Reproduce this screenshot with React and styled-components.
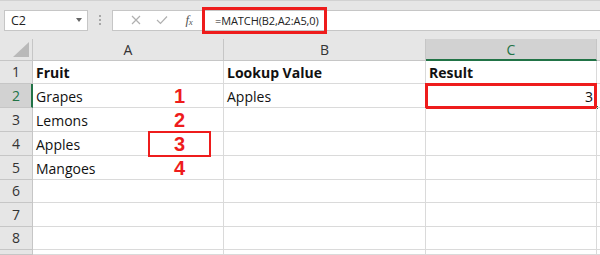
import React from "react";
import styled, { createGlobalStyle, css } from "styled-components";

const Global = createGlobalStyle`
  html, body { margin: 0; padding: 0; background: #fff; }
  body { font-family: "Open Sans", "Liberation Sans", sans-serif; }
  * { box-sizing: border-box; }
`;

const RED = "#ee1c1c";
const GREEN = "#217346";
const GRID = "#dadada";
const HEAD_BG = "#e6e6e6";
const HEAD_LINE = "#c6c6c6";

const Frame = styled.div`
  width: 600px;
  height: 255px;
  overflow: hidden;
  display: flex;
  flex-direction: column;
  background: #fff;
`;

const Toolbar = styled.div`
  height: 39px;
  flex: none;
  background: ${HEAD_BG};
  border-top: 1px solid #d2d2d2;
  display: flex;
  align-items: center;
  padding-left: 4px;
`;

const NameBox = styled.div`
  width: 84px;
  height: 21px;
  background: #fff;
  border: 1px solid ${HEAD_LINE};
  display: flex;
  align-items: center;
  justify-content: space-between;
  padding: 0 5px 0 6px;
  font-size: 12.5px;
  color: #222;
`;

const Caret = styled.span`
  width: 0;
  height: 0;
  border-left: 3.5px solid transparent;
  border-right: 3.5px solid transparent;
  border-top: 4px solid #666;
`;

const Grip = styled.div`
  width: 24px;
  display: flex;
  flex-direction: column;
  align-items: center;
  gap: 2px;
  span {
    width: 2px;
    height: 2px;
    background: #a8a8a8;
  }
`;

const FormulaBar = styled.div`
  flex: 1;
  height: 21px;
  background: #fff;
  border: 1px solid ${HEAD_LINE};
  border-right: none;
  display: flex;
  align-items: center;
`;

const IconGroup = styled.div`
  width: 89px;
  height: 100%;
  display: flex;
  align-items: center;
  padding-left: 10px;
`;

const IconSlot = styled.div`
  width: 29px;
  display: flex;
  justify-content: center;
  align-items: center;
`;

const Fx = styled.span`
  font-family: "Liberation Serif", serif;
  font-style: italic;
  font-size: 13px;
  color: #555;
  letter-spacing: -0.5px;
  sub {
    font-size: 9px;
    vertical-align: -1px;
  }
`;

const Highlight = styled.div`
  width: 125px;
  height: 27px;
  margin-top: 1px;
  border: 3px solid ${RED};
  display: flex;
  align-items: center;
  padding-left: 10px;
  font-size: 11px;
  color: #222;
  white-space: nowrap;
  letter-spacing: -0.1px;
`;

const Sheet = styled.div`
  flex: 1;
  display: grid;
  grid-template-columns: 33px 191px 202px 171px 1fr;
  grid-template-rows: 22px 23px 24px 24px 24px 24px 23px 24px 23px 1fr;
  overflow: hidden;
`;

const Cell = styled.div`
  position: relative;
  border-right: 1px solid ${GRID};
  border-bottom: 1px solid ${GRID};
  display: flex;
  align-items: flex-end;
  padding: 0 4px 1px 3px;
  font-size: 14px;
  color: #111;
  white-space: nowrap;
  ${(p) => p.$bold && css`font-weight: 700;`}
  ${(p) => p.$right && css`justify-content: flex-end; padding-right: 3px;`}
`;

const ColHead = styled.div`
  background: ${(p) => (p.$active ? "#d2d2d2" : HEAD_BG)};
  border-right: 1px solid ${HEAD_LINE};
  border-bottom: ${(p) => (p.$active ? `2px solid ${GREEN}` : `1px solid ${HEAD_LINE}`)};
  display: flex;
  align-items: center;
  justify-content: center;
  font-size: 14px;
  color: ${(p) => (p.$active ? GREEN : "#333")};
  padding-top: ${(p) => (p.$active ? "1px" : "0")};
`;

const Corner = styled.div`
  background: ${HEAD_BG};
  border-right: 1px solid ${HEAD_LINE};
  border-bottom: 1px solid ${HEAD_LINE};
  display: flex;
  align-items: flex-end;
  justify-content: flex-end;
  padding: 0 3px 3px 0;
`;

const RowHead = styled.div`
  background: ${(p) => (p.$active ? "#d2d2d2" : HEAD_BG)};
  border-right: ${(p) => (p.$active ? `2px solid ${GREEN}` : `1px solid ${HEAD_LINE}`)};
  border-bottom: 1px solid ${HEAD_LINE};
  display: flex;
  align-items: center;
  justify-content: center;
  font-size: 14px;
  line-height: 1;
  color: ${(p) => (p.$active ? GREEN : "#333")};
  padding-left: ${(p) => (p.$active ? "1px" : "0")};
`;

const Marker = styled.span`
  position: absolute;
  left: 115px;
  width: 63px;
  top: 4px;
  height: 16px;
  display: flex;
  align-items: center;
  justify-content: center;
  font-family: "Liberation Sans", Arial, sans-serif;
  font-size: 20px;
  font-weight: 700;
  color: ${RED};
  line-height: 16px;
`;

const MarkBox = styled.span`
  position: absolute;
  left: 115px;
  width: 63px;
  top: -1px;
  bottom: -2px;
  border: 2px solid ${RED};
`;

const ResultBox = styled.span`
  position: absolute;
  left: -1px;
  right: -1px;
  top: -1px;
  bottom: -2px;
  border: 3px solid ${RED};
`;

const Handle = styled.span`
  position: absolute;
  right: -2px;
  bottom: -2px;
  width: 3px;
  height: 3px;
  background: ${GREEN};
`;

const CellText = styled.span`
  position: relative;
`;

const rows = [
  { a: "Fruit", b: "Lookup Value", c: "Result", bold: true },
  { a: "Grapes", b: "Apples", c: "3", mark: "1", result: true },
  { a: "Lemons", mark: "2" },
  { a: "Apples", mark: "3", box: true },
  { a: "Mangoes", mark: "4" },
  {},
  {},
  {},
  {},
];

export default function App() {
  return (
    <>
      <Global />
      <Frame>
        <Toolbar>
          <NameBox>
            <span>C2</span>
            <Caret />
          </NameBox>
          <Grip>
            <span />
            <span />
            <span />
          </Grip>
          <FormulaBar>
            <IconGroup>
              <IconSlot>
                <svg width="10" height="10" viewBox="0 0 10 10">
                  <path d="M1 1 L9 9 M9 1 L1 9" stroke="#b0b0b0" strokeWidth="1.2" fill="none" />
                </svg>
              </IconSlot>
              <IconSlot>
                <svg width="12" height="10" viewBox="0 0 12 10">
                  <path d="M1 5 L4.5 8.5 L11 1.5" stroke="#b0b0b0" strokeWidth="1.2" fill="none" />
                </svg>
              </IconSlot>
              <IconSlot>
                <Fx>
                  f<sub>x</sub>
                </Fx>
              </IconSlot>
            </IconGroup>
            <Highlight>=MATCH(B2,A2:A5,0)</Highlight>
          </FormulaBar>
        </Toolbar>
        <Sheet>
          <Corner>
            <svg width="16" height="15" viewBox="0 0 16 15">
              <path d="M16 0 L16 15 L0 15 Z" fill="#b9b9b9" />
            </svg>
          </Corner>
          <ColHead>A</ColHead>
          <ColHead>B</ColHead>
          <ColHead $active>C</ColHead>
          <ColHead />
          {rows.map((r, i) => (
            <React.Fragment key={i}>
              <RowHead $active={i === 1}>{i < 8 ? i + 1 : null}</RowHead>
              <Cell $bold={r.bold}>
                <CellText>{r.a}</CellText>
                {r.box && <MarkBox />}
                {r.mark && <Marker>{r.mark}</Marker>}
              </Cell>
              <Cell $bold={r.bold}>{r.b}</Cell>
              <Cell $bold={r.bold} $right={r.result}>
                {r.c}
                {r.result && (
                  <>
                    <Handle />
                    <ResultBox />
                  </>
                )}
              </Cell>
              <Cell />
            </React.Fragment>
          ))}
        </Sheet>
      </Frame>
    </>
  );
}
